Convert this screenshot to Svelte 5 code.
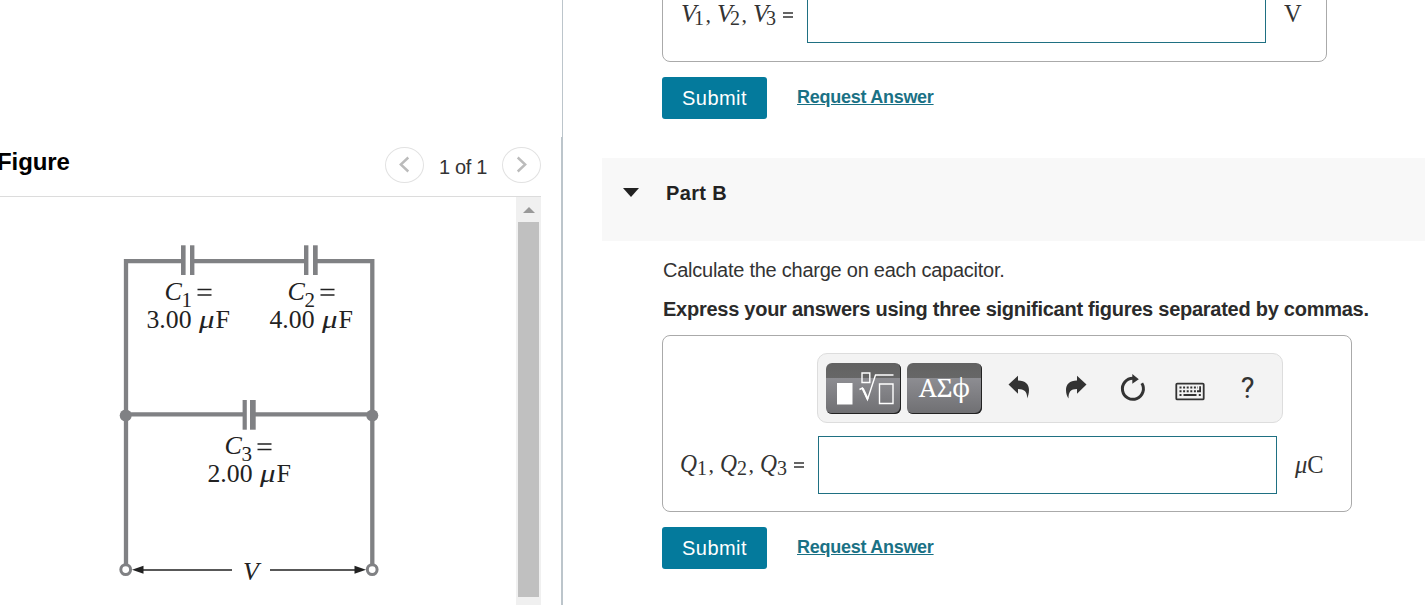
<script lang="ts">
	interface Capacitor {
		sub: string;
		value: string;
		plates: [number, number, number, number];
		top: number;
		x: number;
		valueX: number;
		baseline: number;
	}

	const capacitors: Capacitor[] = [
		{ sub: '1', value: '3.00', plates: [181, 4.6, 190, 4.4], top: 48.3, x: 164.5, valueX: 146.5, baseline: 102.5 },
		{ sub: '2', value: '4.00', plates: [304, 4.4, 313, 4.7], top: 48.3, x: 287.5, valueX: 269.5, baseline: 102.5 },
		{ sub: '3', value: '2.00', plates: [242.6, 4.2, 250, 5.7], top: 203, x: 224.5, valueX: 207.5, baseline: 257 }
	];

	let voltages = $state('');
	let charges = $state('');
</script>

{#snippet equation(symbol: string, xs: number[], step: number, eq: number)}
	<svg class="equation" width="130" height="36" viewBox="0 0 130 36">
		{#each xs as x, i}
			<text {x} y="25" class="symbol" textLength={step} lengthAdjust="spacingAndGlyphs">{symbol}</text>
			<text x={x + (symbol === 'V' ? 13 : 17)} y="27.5" class="index">{i + 1}</text>
			{#if i < 2}
				<text x={x + (symbol === 'V' ? 24.5 : 28.5)} y="25" class="comma">,</text>
			{/if}
		{/each}
		<path d="M{eq} 16h10M{eq} 20h10" stroke="#333" stroke-width="1.4" />
	</svg>
{/snippet}

{#snippet actions()}
	<div class="actions">
		<button class="submit">Submit</button>
		<a class="request" href="#answer">Request Answer</a>
	</div>
{/snippet}

<div class="page">
	<aside class="figure-pane">
		<header class="figure-header">
			<h2>Figure</h2>
			<nav class="pager">
				<button class="round" aria-label="Previous">
					<svg width="14" height="20" viewBox="0 0 14 20"><path d="M10.3 2.500L2.800 9.500l7.500 7" /></svg>
				</button>
				<span>1 of 1</span>
				<button class="round" aria-label="Next">
					<svg width="14" height="20" viewBox="0 0 14 20"><path d="M2.700 2.500l7.500 7-7.500 7" /></svg>
				</button>
			</nav>
		</header>

		<div class="figure-body">
			<svg class="circuit" width="516" height="408" viewBox="0 0 516 408">
				<g class="wire">
					<path d="M126 367.5V64.2H181M194 64.2H304M317 64.2H372.3V367.5" />
					<path d="M126 217.3H243M255 217.3H372.3" />
				</g>
				<circle class="node" cx="125.7" cy="218.6" r="6" />
				<circle class="node" cx="372.3" cy="218.6" r="6" />

				{#each capacitors as c}
					<rect class="plate" x={c.plates[0]} y={c.top} width={c.plates[1]} height="29.7" />
					<rect class="plate" x={c.plates[2]} y={c.top} width={c.plates[3]} height="29.7" />
					<text x={c.x} y={c.baseline} class="ital">C</text>
					<text x={c.x + 17} y={c.baseline + 7} class="small">{c.sub}</text>
					<path class="equals" d="M{c.x + 33} {c.baseline - 10}h14M{c.x + 33} {c.baseline - 4.5}h14" />
					<text x={c.valueX} y={c.baseline + 28} textLength="45" lengthAdjust="spacingAndGlyphs">{c.value}</text>
					<text x={c.valueX + 52.5} y={c.baseline + 28} class="ital mu" textLength="15.5" lengthAdjust="spacingAndGlyphs">μ</text>
					<text x={c.valueX + 69} y={c.baseline + 28}>F</text>
				{/each}

				<circle class="terminal" cx="125.7" cy="372.6" r="4.9" />
				<circle class="terminal" cx="372.2" cy="372.6" r="4.9" />
				<path class="arrow" d="M140 373H232M270 373H358" />
				<path class="head" d="M132 372.8l11.5-4v8zM366 372.8l-11.5-4v8z" />
				<text x="243" y="382.8" class="ital">V</text>
			</svg>
			<div class="scrollbar">
				<div class="up"></div>
				<div class="thumb"></div>
			</div>
		</div>
	</aside>

	<div class="divider"></div>

	<main class="content">
		<section class="answer first">
			<div class="row">
				<div class="label">{@render equation('V', [18, 54, 90], 15.5, 120)}</div>
				<input aria-label="Voltages" bind:value={voltages} />
				<span class="unit">V</span>
			</div>
		</section>
		{@render actions()}

		<header class="part">
			<span class="caret"></span>
			<h3>Part B</h3>
		</header>

		<p class="task">Calculate the charge on each capacitor.</p>
		<p class="hint">Express your answers using three significant figures separated by commas.</p>

		<section class="answer second">
			<div class="toolbar">
				<button class="key" aria-label="Templates">
					<svg width="75" height="51" viewBox="0 0 75 51" fill="none" stroke="#fff" stroke-width="1.4">
						<path d="M11 20h15.5v21.500H11z" fill="#fff" stroke="none" />
						<path d="M36 10h7.800v9.500H36zM53.500 21h13.500v19.500H53.500z" />
						<path d="M33.500 26.500l3-1.500 5 11.500 8-24.500H67.500" />
						<path d="M36.700 25.500l5 10.500" stroke-width="2.2" />
					</svg>
				</button>
				<button class="key greek">ΑΣϕ</button>
				<div class="tools">
					<button aria-label="Undo">
						<svg width="32" height="32" viewBox="0 0 32 32">
							<path d="M5.500 12.600L15 3.700V8.500C22.500 8.500 26 12.500 26 18c0 3.500-1 6.500-1.900 8.600C24.500 20 21.500 17 15 17v4.700z" />
						</svg>
					</button>
					<button aria-label="Redo">
						<svg width="32" height="32" viewBox="0 0 32 32">
							<path d="M26.500 12.600L17 3.700V8.500C9.500 8.500 6 12.500 6 18c0 3.500 1 6.500 2.500 8.600C8.500 20 10.500 17 17 17v4.700z" />
						</svg>
					</button>
					<button aria-label="Reset">
						<svg width="32" height="32" viewBox="0 0 32 32">
							<path d="M16 6.300A10.500 10.500 0 1 0 24.800 11.200" fill="none" stroke="#333" stroke-width="3" />
							<path d="M15.300 2l6.500 5.200-6.500 4.600z" />
						</svg>
					</button>
					<button aria-label="Keyboard">
						<svg width="32" height="32" viewBox="0 0 32 32">
							<rect x="2.300" y="11.600" width="27.400" height="15.800" rx="1" fill="none" stroke="#333" stroke-width="1.800" />
							<path d="M5.500 15.500H24M5.500 19.300H22" stroke="#333" stroke-width="2" stroke-dasharray="2 1.600" />
							<path d="M23 20.300h4v-6h-1.800v4H23zM5.500 22h2v2h-2zM9.500 22h13v2h-13zM24.800 22h2v2h-2z" />
						</svg>
					</button>
					<button class="help" aria-label="Help">?</button>
				</div>
			</div>
			<div class="row">
				<div class="label">{@render equation('Q', [17, 57, 97], 17, 131)}</div>
				<input aria-label="Charges" bind:value={charges} />
				<span class="unit"><i>μ</i>C</span>
			</div>
		</section>
		{@render actions()}
	</main>
</div>

<style>
	:global(body) {
		background: #fff;
		overflow: hidden;
	}

	.page {
		display: flex;
		width: 1425px;
		height: 605px;
		overflow: hidden;
		font-family: 'Liberation Sans', Arial, sans-serif;
		color: #333;
	}

	button {
		border: 0;
		padding: 0;
		background: none;
		font-family: inherit;
		color: inherit;
	}

	h2,
	h3,
	p {
		margin: 0;
	}

	.figure-pane {
		width: 541px;
		padding-top: 137px;
		flex: none;
	}

	.figure-header {
		display: flex;
		justify-content: space-between;
		height: 59px;
		border-bottom: 1px solid #dcdcdc;
	}

	.figure-header h2 {
		margin: 11px 0 0 -3px;
		font-size: 24px;
		line-height: 28px;
		letter-spacing: -0.1px;
		color: #000;
	}

	.pager {
		display: flex;
		align-items: center;
		height: 36px;
		margin-top: 10px;
	}

	.pager span {
		width: 78px;
		padding-top: 4px;
		text-align: center;
		font-size: 20px;
		letter-spacing: -0.3px;
		white-space: nowrap;
	}

	.round {
		display: flex;
		align-items: center;
		justify-content: center;
		box-sizing: border-box;
		width: 39px;
		height: 36px;
		border: 1px solid #e2e2e2;
		border-radius: 50%;
	}

	.round path {
		fill: none;
		stroke: #bbb;
		stroke-width: 2.4;
	}

	.figure-body {
		display: flex;
		height: 408px;
	}

	.circuit {
		display: block;
		font-family: 'Liberation Serif', 'Times New Roman', serif;
		font-size: 26px;
		fill: #222;
	}

	.wire {
		fill: none;
		stroke: #808184;
		stroke-width: 4.3;
	}

	.node,
	.plate {
		fill: #808184;
	}

	.terminal {
		fill: #fff;
		stroke: #808184;
		stroke-width: 3;
	}

	.equals,
	.arrow {
		stroke: #222;
		stroke-width: 1.6;
	}

	.ital {
		font-style: italic;
	}

	.small {
		font-size: 21px;
	}

	.scrollbar {
		width: 25px;
		background: #f0f0f0;
	}

	.up {
		width: 0;
		margin: 10px auto 9px;
		border: 6px solid transparent;
		border-top: 0;
		border-bottom-color: #999;
	}

	.thumb {
		width: 21px;
		height: 375px;
		margin: 0 auto;
		background: #c0c0c0;
	}

	/* the rule is thinner above the figure header */
	.divider {
		display: flex;
		flex-direction: column;
		flex: none;
		align-items: flex-end;
		width: 2px;
		margin: 0 39px 0 20px;
	}

	.divider::before {
		content: '';
		width: 1px;
		height: 137px;
		background: #bcc5cb;
	}

	.divider::after {
		content: '';
		flex: 1;
		width: 2px;
		background: #bcc5cb;
	}

	.content {
		flex: 1;
		min-width: 0;
	}

	.answer {
		box-sizing: border-box;
		margin-left: 60px;
		border: 1px solid #aaa;
		border-radius: 8px;
	}

	.first {
		width: 665px;
		height: 78px;
		margin-top: -16px;
	}

	.second {
		width: 690px;
		height: 177px;
		margin-top: 14px;
		padding-top: 17px;
	}

	.row {
		display: flex;
		align-items: center;
		height: 58px;
	}

	.second .row {
		margin-top: 13px;
	}

	.label {
		width: 144px;
		flex: none;
	}

	.second .label {
		width: 155px;
	}

	.equation {
		display: block;
		overflow: visible;
		font-family: 'Liberation Serif', 'Times New Roman', serif;
		fill: #333;
	}

	.first .equation {
		margin-top: 2px;
	}

	.symbol {
		font-size: 25px;
		font-style: italic;
	}

	.index {
		font-size: 20px;
	}

	.comma {
		font-size: 22px;
	}

	input {
		box-sizing: border-box;
		width: 459px;
		height: 58px;
		padding: 0 10px;
		border: 1px solid #1f7082;
		border-radius: 0;
		background: #fff;
		font-size: 20px;
		outline: none;
	}

	.unit {
		margin-left: 18px;
		font-family: 'Liberation Serif', 'Times New Roman', serif;
		font-size: 24.5px;
	}

	.actions {
		display: flex;
		align-items: center;
		margin: 15px 0 0 60px;
	}

	.submit {
		width: 105px;
		height: 42px;
		border-radius: 3px;
		background: #047a9c;
		color: #fff;
		font-size: 20px;
		letter-spacing: 0.45px;
	}

	.request {
		margin: -2px 0 0 30px;
		color: #1a7185;
		font-size: 18px;
		font-weight: bold;
		letter-spacing: -0.27px;
	}

	.part {
		display: flex;
		align-items: flex-start;
		box-sizing: border-box;
		height: 83px;
		margin-top: 39px;
		padding: 23px 0 0 21px;
		background: #f8f8f8;
	}

	.caret {
		margin-top: 7px;
		border: 8px solid transparent;
		border-top: 9px solid #222;
		border-bottom: 0;
	}

	.part h3 {
		margin-left: 27px;
		font-size: 20px;
		line-height: 24px;
		letter-spacing: 0.35px;
		color: #222;
	}

	.task,
	.hint {
		margin-left: 61px;
		font-size: 20px;
		line-height: 24px;
		white-space: nowrap;
	}

	.task {
		margin-top: 17px;
		letter-spacing: -0.25px;
	}

	.hint {
		margin-top: 15px;
		font-weight: bold;
		letter-spacing: -0.26px;
		color: #2b2b2b;
	}

	.toolbar {
		display: flex;
		align-items: center;
		box-sizing: border-box;
		width: 466px;
		height: 70px;
		margin-left: 154px;
		padding-left: 8px;
		border: 1px solid #ddd;
		border-radius: 10px;
		background: #f3f3f3;
	}

	.key {
		display: block;
		flex: none;
		box-sizing: border-box;
		width: 75px;
		height: 51px;
		margin-right: 6px;
		border-radius: 6px;
		background: linear-gradient(#626262 0, #676767 15px, #8d8d92 15px, #6f6f72 100%);
		box-shadow: inset -1px -1px 0 #222;
		color: #fff;
	}

	.key svg {
		display: block;
	}

	.greek {
		padding-bottom: 3px;
		font-family: 'Noto Serif', 'DejaVu Serif', 'Liberation Serif', serif;
		font-size: 25.5px;
	}

	.tools {
		display: flex;
		margin-left: 2px;
	}

	.tools button {
		display: flex;
		align-items: center;
		justify-content: center;
		width: 57px;
		height: 50px;
		fill: #333;
	}

	.tools .help {
		padding-left: 2px;
		font-family: Roboto, sans-serif;
		font-size: 29px;
	}
</style>
